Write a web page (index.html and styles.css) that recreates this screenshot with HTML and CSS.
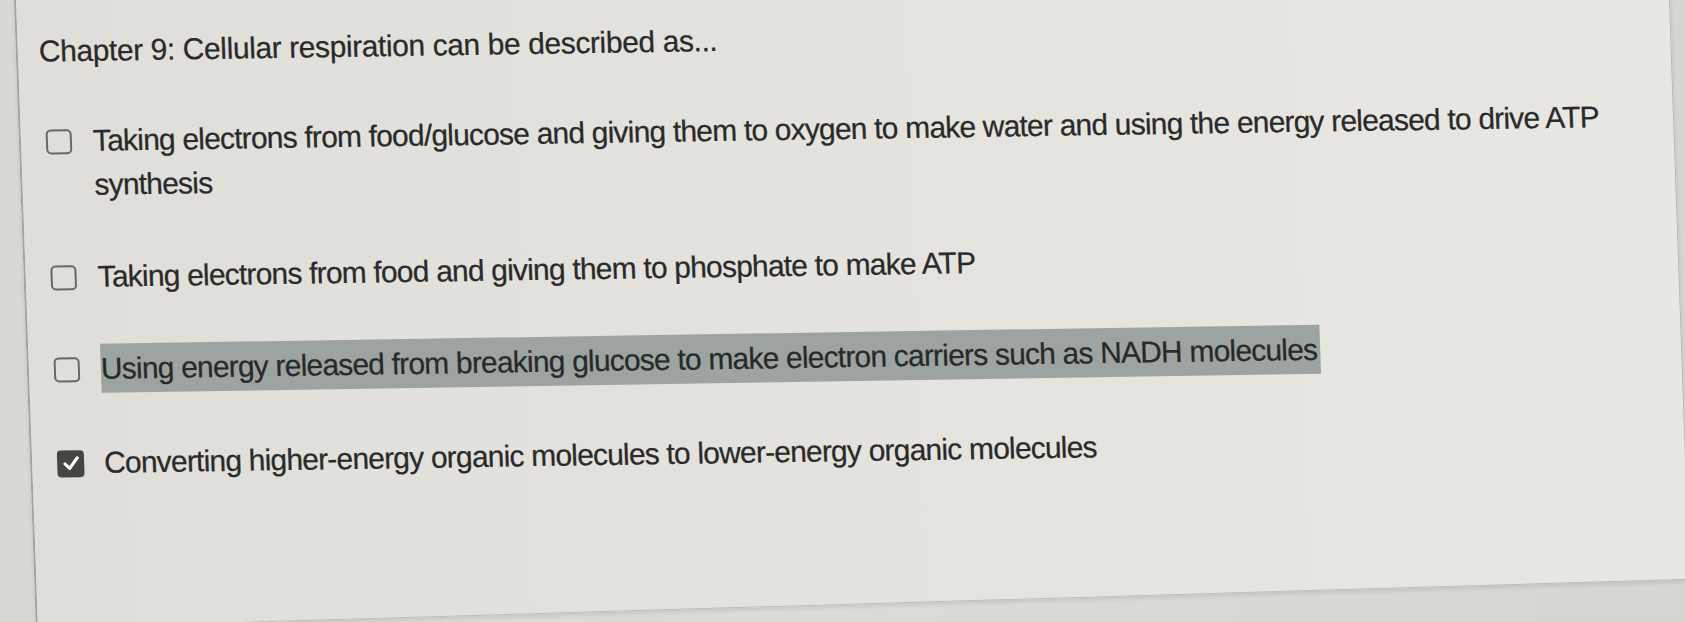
FILE: index.html
```html
<!DOCTYPE html>
<html lang="en">
<head>
<meta charset="utf-8">
<title>Chapter 9 quiz</title>
<link rel="stylesheet" href="styles.css">
</head>
<body>
<div class="card">
  <div class="content">
    <h2 class="question">Chapter 9: Cellular respiration can be described as...</h2>
    <ul class="answers">
      <li class="answer">
        <span class="box-cell"><span class="box"></span></span>
        <span class="label">Taking electrons from food/glucose and giving them to oxygen to make water and using the energy released to drive ATP synthesis</span>
      </li>
      <li class="answer">
        <span class="box-cell"><span class="box"></span></span>
        <span class="label">Taking electrons from food and giving them to phosphate to make ATP</span>
      </li>
      <li class="answer">
        <span class="box-cell"><span class="box"></span></span>
        <span class="label"><span class="selected">Using energy released from breaking glucose to make electron carriers such as NADH molecules</span></span>
      </li>
      <li class="answer">
        <span class="box-cell">
          <span class="box checked">
            <svg viewBox="0 0 24 24" width="20" height="20" aria-hidden="true"><path d="M4.5 12.5 L10 18 L19.5 5.5" fill="none" stroke="#ffffff" stroke-width="3.8" stroke-linecap="round" stroke-linejoin="round"/></svg>
          </span>
        </span>
        <span class="label">Converting higher-energy organic molecules to lower-energy organic molecules</span>
      </li>
    </ul>
  </div>
</div>
</body>
</html>
```

FILE: styles.css
```css
html, body {
  margin: 0;
  padding: 0;
}

body {
  width: 1685px;
  height: 622px;
  overflow: hidden;
  background: linear-gradient(90deg, #d9d8d3 0%, #dcdbd6 50%, #d6d5d0 100%);
  font-family: "Liberation Sans", Arial, sans-serif;
  color: #2a2a2a;
}

/* question panel, seen at a slight angle */
.card {
  margin-left: 14px;
  width: 1656px;
  height: 629px;
  box-sizing: border-box;
  border-left: 2px solid #a3a29e;
  border-right: 1px solid #b9b8b3;
  border-bottom: 1px solid #bdbcb7;
  border-bottom-right-radius: 8px;
  background: linear-gradient(90deg, #dfded9 0%, #e3e2dd 45%, #e8e7e2 100%);
  box-shadow: 0 2px 4px rgba(0, 0, 0, 0.10);
  transform: skewX(2deg) skewY(-1.7deg);
  transform-origin: 0 0;
}

.content {
  padding-top: 30px;
  transform: skewY(0.8deg);
  transform-origin: 0 0;
}

.question {
  margin: 0;
  padding-left: 21px;
  font-size: 30px;
  font-weight: normal;
  line-height: 44px;
  letter-spacing: -0.4px;
  -webkit-text-stroke: 0.25px #2a2a2a;
}

.answers {
  list-style: none;
  margin: 46px 0 0;
  padding: 0;
  display: flex;
  flex-direction: column;
  gap: 48px;
}

.answer {
  display: flex;
  align-items: flex-start;
  gap: 20px;
  padding-left: 25px;
  padding-right: 10px;
  font-size: 30px;
  line-height: 44px;
  letter-spacing: -0.8px;
  -webkit-text-stroke: 0.25px #2a2a2a;
}

.box-cell {
  flex: 0 0 27px;
  height: 44px;
  display: flex;
  align-items: center;
}

.box {
  flex: 0 0 auto;
  width: 26px;
  height: 25px;
  box-sizing: border-box;
  border: 2px solid #686866;
  border-radius: 5px;
}

.box.checked {
  width: 27px;
  height: 27px;
  border: none;
  border-radius: 4px;
  background: #454544;
  display: flex;
  align-items: center;
  justify-content: center;
}

.label {
  flex: 1 1 auto;
}

.selected {
  display: inline-block;
  line-height: 49px;
  margin-top: -3px;
  padding-right: 3px;
  background: #9ca3a0;
  color: #282a29;
}
```
